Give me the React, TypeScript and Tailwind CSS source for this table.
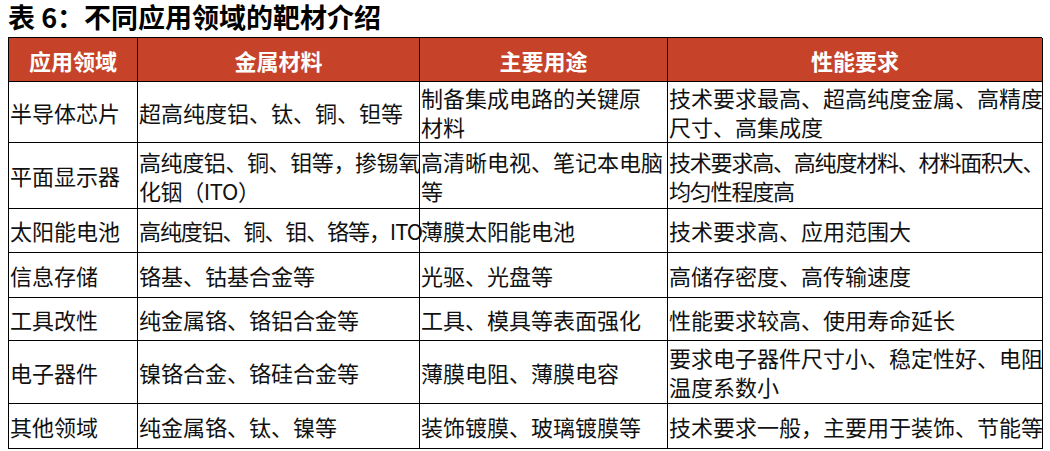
import React from "react";

type Cell = { lines: string[]; track?: string };

const rows: { h: string; cells: Cell[] }[] = [
  {
    h: "h-[61px]",
    cells: [
      { lines: ["半导体芯片"] },
      { lines: ["超高纯度铝、钛、铜、钽等"] },
      { lines: ["制备集成电路的关键原", "材料"] },
      { lines: ["技术要求最高、超高纯度金属、高精度", "尺寸、高集成度"] },
    ],
  },
  {
    h: "h-[66px]",
    cells: [
      { lines: ["平面显示器"] },
      { lines: ["高纯度铝、铜、钼等，掺锡氧", "化铟（ITO）"], track: "tracking-[-0.4px]" },
      { lines: ["高清晰电视、笔记本电脑", "等"] },
      { lines: ["技术要求高、高纯度材料、材料面积大、", "均匀性程度高"], track: "tracking-[-1.2px]" },
    ],
  },
  {
    h: "h-[44px]",
    cells: [
      { lines: ["太阳能电池"] },
      { lines: ["高纯度铝、铜、钼、铬等，ITO"], track: "tracking-[-1.1px]" },
      { lines: ["薄膜太阳能电池"] },
      { lines: ["技术要求高、应用范围大"] },
    ],
  },
  {
    h: "h-[45px]",
    cells: [
      { lines: ["信息存储"] },
      { lines: ["铬基、钴基合金等"] },
      { lines: ["光驱、光盘等"] },
      { lines: ["高储存密度、高传输速度"] },
    ],
  },
  {
    h: "h-[43px]",
    cells: [
      { lines: ["工具改性"] },
      { lines: ["纯金属铬、铬铝合金等"] },
      { lines: ["工具、模具等表面强化"] },
      { lines: ["性能要求较高、使用寿命延长"] },
    ],
  },
  {
    h: "h-[63px]",
    cells: [
      { lines: ["电子器件"] },
      { lines: ["镍铬合金、铬硅合金等"] },
      { lines: ["薄膜电阻、薄膜电容"] },
      { lines: ["要求电子器件尺寸小、稳定性好、电阻", "温度系数小"] },
    ],
  },
  {
    h: "h-[45px]",
    cells: [
      { lines: ["其他领域"] },
      { lines: ["纯金属铬、钛、镍等"] },
      { lines: ["装饰镀膜、玻璃镀膜等"] },
      { lines: ["技术要求一般，主要用于装饰、节能等"] },
    ],
  },
];

const headers = ["应用领域", "金属材料", "主要用途", "性能要求"];

export default function App() {
  return (
    <div
      className="w-[1050px] h-[451px] bg-white text-[#111] overflow-hidden pl-[8px]"
      style={{ fontFamily: '"Noto Sans CJK SC", "Noto Sans", sans-serif' }}
    >
      <div className="h-[37px] text-[27px] font-bold leading-[34px] text-black whitespace-nowrap">
        表 6：不同应用领域的靶材介绍
      </div>
      <div className="w-[1034px] grid grid-cols-[129px_282px_248px_375px] border-l-[1.5px] border-t-[1.5px] border-black">
        {headers.map((h) => (
          <div
            key={h}
            className="h-[44px] bg-[#c6432a] text-white font-bold text-[22px] flex items-center justify-center border-r-[1.5px] border-b-[1.5px] border-black leading-none"
          >
            {h}
          </div>
        ))}
        {rows.map((r, ri) =>
          r.cells.map((c, ci) => (
            <div
              key={ri + "-" + ci}
              className={`${r.h} flex items-center pl-[1px] text-[22px] leading-[29px] whitespace-nowrap border-r-[1.5px] border-b-[1.5px] border-black overflow-visible ${c.track ?? ""}`}
            >
              <div>
                {c.lines.map((l, li) => (
                  <div key={li}>{l}</div>
                ))}
              </div>
            </div>
          ))
        )}
      </div>
    </div>
  );
}
